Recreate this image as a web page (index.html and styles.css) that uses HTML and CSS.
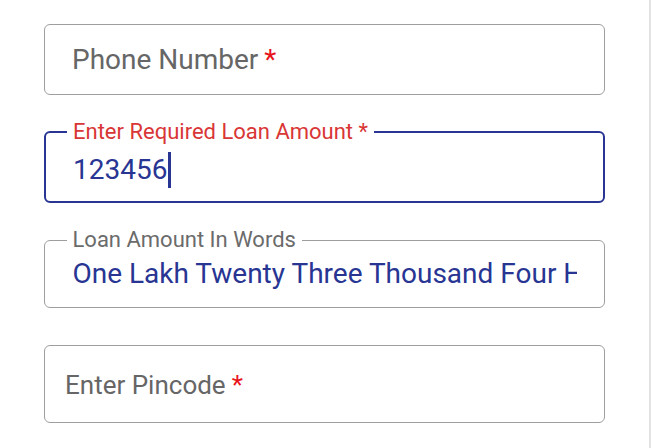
FILE: index.html
```html
<!DOCTYPE html>
<html>
<head>
<meta charset="utf-8">
<link rel="stylesheet" href="styles.css">
</head>
<body>
<div class="page">
  <div class="field plain">
    <span class="placeholder">Phone Number</span><span class="req">*</span>
  </div>
  <fieldset class="field outlined focused">
    <legend class="legend legend-red">Enter Required Loan Amount *</legend>
    <div class="value">123456<span class="caret"></span></div>
  </fieldset>
  <fieldset class="field outlined words">
    <legend class="legend legend-gray">Loan Amount In Words</legend>
    <div class="value value-words">One Lakh Twenty Three Thousand Four Hundred Fifty Six</div>
  </fieldset>
  <div class="field plain pincode">
    <span class="placeholder small">Enter Pincode</span><span class="req small">*</span>
  </div>
</div>
</body>
</html>
```
FILE: styles.css
```css
html, body {
  margin: 0;
  padding: 0;
  background: #ffffff;
}
body {
  font-family: Roboto, "Liberation Sans", sans-serif;
}
.page {
  box-sizing: border-box;
  width: 651px;
  height: 448px;
  border-right: 2px solid #e3e3e3;
  padding: 24px 0 0 44px;
  display: flex;
  flex-direction: column;
}
.field {
  box-sizing: border-box;
  width: 561px;
  border: 1.5px solid #9e9e9e;
  border-radius: 6px;
  margin: 0;
  min-width: 0;
}
.plain {
  height: 71px;
  display: flex;
  align-items: center;
  padding-left: 27px;
}
.placeholder {
  font-size: 28px;
  color: #666666;
}
.req {
  font-size: 28px;
  color: #e8141b;
  margin-left: 6px;
}
.placeholder.small, .req.small {
  font-size: 26px;
}
.pincode {
  height: 78px;
  margin-top: 37px;
  padding-left: 20px;
  padding-top: 1px;
}
.outlined {
  padding: 9px 0 16px 27px;
  margin-top: 26px;
  height: 82px;
}
.focused {
  border: 2.5px solid #283593;
}
.words {
  height: 79px;
  padding-left: 27.5px;
  padding-top: 6.5px;
  padding-bottom: 15px;
}
.legend {
  font-size: 22px;
  line-height: 22px;
  padding: 0 6px;
  margin-left: -6px;
}
.legend-red {
  color: #d93636;
}
.legend-gray {
  color: #6b6b6b;
}
.value {
  font-size: 28px;
  line-height: 32px;
  color: #283593;
  white-space: nowrap;
  overflow: hidden;
  width: 504px;
  display: flex;
  align-items: center;
}
.value-words {
  display: block;
}
.caret {
  display: inline-block;
  width: 2.5px;
  height: 36px;
  background: #283593;
  margin-left: 1px;
}
```
